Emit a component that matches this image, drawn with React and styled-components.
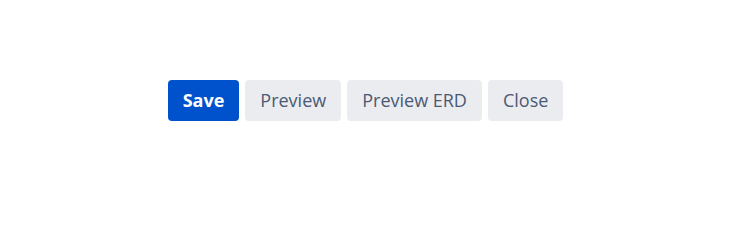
import styled, { createGlobalStyle } from 'styled-components';

const GlobalStyle = createGlobalStyle`
  html, body {
    margin: 0;
    padding: 0;
    background: #ffffff;
  }
`;

const Page = styled.div`
  width: 734px;
  height: 201px;
  display: flex;
  align-items: center;
  justify-content: center;
`;

const ButtonGroup = styled.div`
  display: flex;
  gap: 6px;
  padding-right: 3px;
`;

const Button = styled.button`
  height: 41px;
  padding: 0 15px 1px;
  border: none;
  border-radius: 4px;
  font-family: "Open Sans", "Noto Sans", sans-serif;
  font-size: 18px;
  font-weight: ${(p) => (p.$primary ? 700 : 400)};
  color: ${(p) => (p.$primary ? '#ffffff' : '#4a5a75')};
  background: ${(p) => (p.$primary ? '#0052cc' : '#ebecf0')};
  cursor: pointer;
`;

function App() {
  return (
    <>
      <GlobalStyle />
      <Page>
        <ButtonGroup>
          <Button $primary>Save</Button>
          <Button>Preview</Button>
          <Button>Preview ERD</Button>
          <Button>Close</Button>
        </ButtonGroup>
      </Page>
    </>
  );
}

export default App;
